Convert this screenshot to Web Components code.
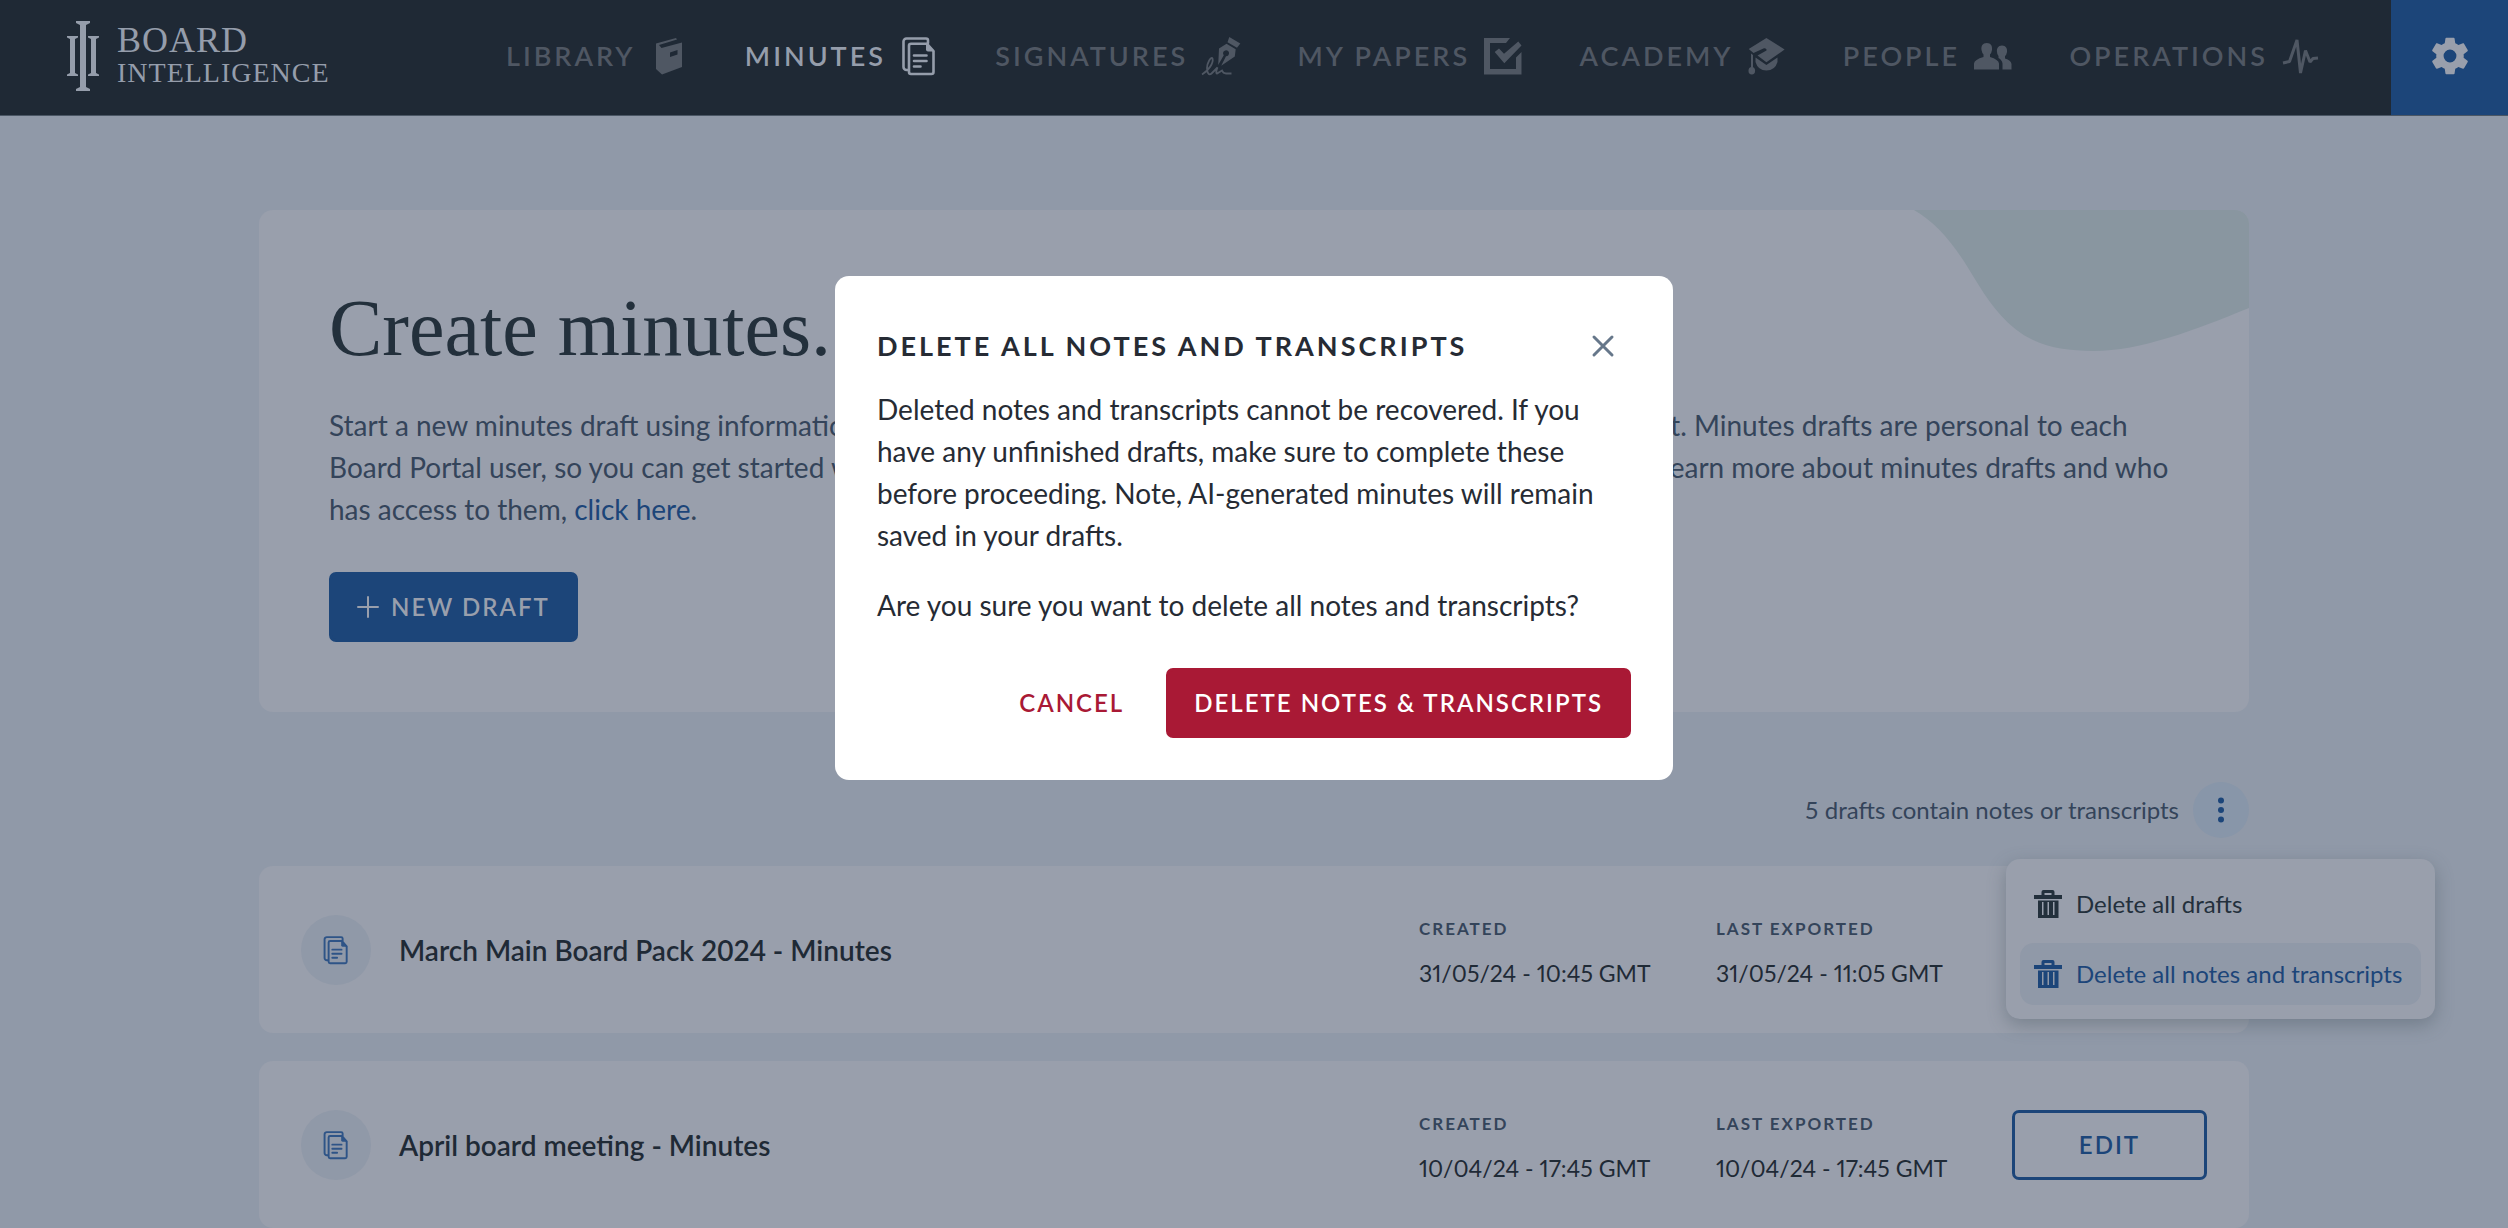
<!DOCTYPE html>
<html lang="en">
<head>
<meta charset="utf-8">
<title>Minutes</title>
<style>
  :root {
    --page: #9099a8;
    --card: #999fac;
    --bar: #1f2935;
    --blue: #1c4579;
    --red: #a91935;
    --ink: #1f2a36;
    --muted: #34445a;
  }
  body {
    margin: 0;
    min-height: 100vh;
    background: var(--page);
    color: var(--ink);
    font-family: Lato, "Liberation Sans", sans-serif;
    font-size: 28px;
    line-height: 42px;
  }
  main {
    box-sizing: border-box;
    max-width: 1990px;
    margin: 0 auto;
    padding-top: 94px;
  }
</style>
</head>
<body>
<top-bar>
  <nav-item icon="book">Library</nav-item>
  <nav-item icon="doc" active>Minutes</nav-item>
  <nav-item icon="sign">Signatures</nav-item>
  <nav-item icon="check">My papers</nav-item>
  <nav-item icon="academy">Academy</nav-item>
  <nav-item icon="people">People</nav-item>
  <nav-item icon="pulse">Operations</nav-item>
</top-bar>

<main>
  <hero-card heading="Create minutes.">
    Start a new minutes draft using information from any agenda, a book or your own notes, or create a blank draft. Minutes drafts are personal to each<br>
    Board Portal user, so you can get started without anyone else being able to view all your work in progress. To learn more about minutes drafts and who<br>
    has access to them, <text-link href="#help">click here</text-link>.
  </hero-card>
  <drafts-toolbar>
    5 drafts contain notes or transcripts
    <menu-item slot="menu">Delete all drafts</menu-item>
    <menu-item slot="menu" selected>Delete all notes and transcripts</menu-item>
  </drafts-toolbar>
  <draft-row created="31/05/24 - 10:45 GMT" exported="31/05/24 - 11:05 GMT">March Main Board Pack 2024 - Minutes</draft-row>
  <draft-row created="10/04/24 - 17:45 GMT" exported="10/04/24 - 17:45 GMT">April board meeting - Minutes</draft-row>
</main>

<confirm-dialog heading="Delete all notes and transcripts">
  <p>Deleted notes and transcripts cannot be recovered. If you have any unfinished drafts, make sure to complete these before proceeding. Note, AI-generated minutes will remain saved in your drafts.</p>
  <p>Are you sure you want to delete all notes and transcripts?</p>
  <app-button slot="actions" kind="text">Cancel</app-button>
  <app-button slot="actions" kind="danger">Delete notes &amp; transcripts</app-button>
</confirm-dialog>

<script>
const ICONS = {
  book: ["0 0 38 38", `
    <path d="M6 6.5 26 1l1 1.5L9 8l2.5 3L32 5.5V30l-20 7.5L6 32zM20 15.5v4.500l7.5-2.5V13z" fill-rule="evenodd"/>`],
  doc: ["0 0 38 38", `
    <g fill="none" stroke="currentColor" stroke-width="2.6" stroke-linecap="round" stroke-linejoin="round">
      <path d="M8 33H6.5A3 3 0 0 1 3.5 30V4.5A3 3 0 0 1 6.5 1.5H26a2 2 0 0 1 2 2V6"/>
      <path d="M27 6.8H11A2 2 0 0 0 9 8.8V35a2 2 0 0 0 2 2H31.5a2 2 0 0 0 2-2V14z"/>
      <path d="M14 18.5H26.5M14 24H26.5M14 29.5H20.5"/>
    </g>
    <path d="M26 5.5V12.5a2 2 0 0 0 2 2H34.5z"/>`],
  sign: ["0 0 38 38", `
    <path d="M27.3 0 38.3 6.5 35 10.7 25.5 5.3z"/>
    <path d="M24.5 6.8 33.7 12.3 32.8 19.5 19.2 28.8 24 19.3A3 3 0 1 0 21.8 18.3L16.2 28 17 11.5z"/>
    <path d="M0 37.5C6 34 12 26 10.5 21.5C9 19 5 26 5 31C5 36 7 39 9.5 36.5L15.5 30.5C14 34 14 36.5 15 36.5L20 33.5C21 36 22 36.5 24 36.5H29.5" fill="none" stroke="currentColor" stroke-width="1.8"/>`],
  check: ["0 0 38 38", `
    <path d="M0 1H26L22 6H6V32H32V20.5L37.5 15V37.5H0z"/>
    <path d="M10.7 15 15 11.5 20 16.7 34.3 4.5 37.5 8.5 20.3 26.3z"/>`],
  academy: ["0 0 38 38", `
    <path d="M18.4 1 36.6 12.5 18.4 25.3 9.5 18.5 18.5 13.5Q19 11 16 11.2L5.5 16 .7 12z"/>
    <path d="M7.5 20.5 18.4 28 29.5 20.5V25Q27 33.5 18.4 33.5Q10 33.5 7.5 25z"/>
    <path d="M3 16.5 5 18V31H3z"/><ellipse cx="3.8" cy="33.8" rx="3.3" ry="3.8"/>`],
  people: ["0 0 38 38", `
    <path d="M12.8 6C17 6 18.5 9 18 13Q17.5 16 16 17.5V20Q24.5 22.5 25 26.5V32.5H0V26.5Q.5 22.5 9.5 20V17.5Q8 16 7.5 13C7 9 8.5 6 12.8 6z"/>
    <path d="M28 8.5C32 8.5 33.5 11.5 33 15Q32.5 18 31 19V21.5Q37 23 37.5 27V32.5H28.5V26.5Q28 23 24.5 21V19Q23 17.5 23 15C22.5 11.5 24 8.5 28 8.5z"/>`],
  pulse: ["0 0 38 38", `
    <path d="M1 26 7.5 24.5 15 3 18.5 36 23.5 13.5 28 25 31 21.5 36 21" fill="none" stroke="currentColor" stroke-width="3" stroke-linejoin="bevel"/>`],
  gear: ["0 0 24 24", `
    <path d="M19.43 12.98c.04-.32.07-.64.07-.98s-.03-.66-.07-.98l2.11-1.65c.19-.15.24-.42.12-.64l-2-3.46c-.12-.22-.39-.3-.61-.22l-2.49 1c-.52-.4-1.08-.73-1.69-.98l-.38-2.65C14.46 2.18 14.25 2 14 2h-4c-.25 0-.46.18-.49.42l-.38 2.65c-.61.25-1.17.59-1.69.98l-2.49-1c-.23-.09-.49 0-.61.22l-2 3.46c-.13.22-.07.49.12.64l2.11 1.65c-.04.32-.07.65-.07.98s.03.66.07.98l-2.11 1.65c-.19.15-.24.42-.12.64l2 3.46c.12.22.39.3.61.22l2.49-1c.52.4 1.08.73 1.69.98l.38 2.65c.03.24.24.42.49.42h4c.25 0 .46-.18.49-.42l.38-2.65c.61-.25 1.17-.59 1.69-.98l2.49 1c.23.09.49 0 .61-.22l2-3.46c.12-.22.07-.49-.12-.64zM12 15.5a3.5 3.5 0 1 1 0-7 3.5 3.5 0 0 1 0 7z"/>`],
  trash: ["0 0 28 28", `
    <path d="M0 5H7.5V2Q7.5 0 9.5 0H18.5Q20.5 0 20.5 2V5H28V9H0zM10.5 5H17.5V3H10.5z" fill-rule="evenodd"/>
    <path d="M4 10.5H24.5V28H4zM8 12V25H9.5V12zM13.5 12V25H15V12zM19 12V25H20.5V12z" fill-rule="evenodd"/>`],
  plus: ["0 0 22 22", `<path d="M11 1V21M1 11H21" fill="none" stroke="currentColor" stroke-width="2" stroke-linecap="round"/>`],
  close: ["0 0 22 22", `<path d="M2 2 20 20M20 2 2 20" fill="none" stroke="currentColor" stroke-width="3" stroke-linecap="round"/>`],
  dots: ["0 0 28 28", `<circle cx="14" cy="4.5" r="3"/><circle cx="14" cy="14" r="3"/><circle cx="14" cy="23.5" r="3"/>`]
};

const BASE = `:host, * { box-sizing: border-box; }`;

class AppIcon extends HTMLElement {
  connectedCallback() {
    const [box, shapes] = ICONS[this.getAttribute("name")];
    this.attachShadow({ mode: "open" }).innerHTML = `
      <style>
        :host { display: block; flex: none; width: 38px; height: 38px; }
        svg { display: block; width: 100%; height: 100%; fill: currentColor; overflow: visible; }
      </style>
      <svg viewBox="${box}" aria-hidden="true">${shapes}</svg>
    `;
  }
}

class AppButton extends HTMLElement {
  connectedCallback() {
    const icon = this.getAttribute("icon");
    this.attachShadow({ mode: "open" }).innerHTML = `
      <style>
        ${BASE}
        :host { display: inline-block; }
        button {
          display: flex;
          align-items: center;
          justify-content: center;
          gap: 12px;
          width: 100%;
          height: 70px;
          padding: 0 25px;
          border: 3px solid transparent;
          border-radius: 7px;
          background: none;
          color: var(--red);
          font: 600 24px/36px Lato, "Liberation Sans", sans-serif;
          letter-spacing: 2px;
          text-transform: uppercase;
          white-space: nowrap;
          cursor: pointer;
        }
        :host([kind="primary"]) button { background: var(--blue); border-color: var(--blue); color: var(--card); }
        :host([kind="danger"]) button { background: var(--red); border-color: var(--red); color: #fff; }
        :host([kind="outline"]) button { border-color: var(--blue); color: var(--blue); }
        app-icon { width: 22px; height: 22px; }
      </style>
      <button type="button">${icon ? `<app-icon name="${icon}"></app-icon>` : ""}<slot></slot></button>
    `;
  }
}

class TextLink extends HTMLElement {
  connectedCallback() {
    this.attachShadow({ mode: "open" }).innerHTML =
      `<style>:host { display: inline; } a { color: var(--blue); text-decoration: none; }</style>` +
      `<a href="${this.getAttribute("href")}"><slot></slot></a>`;
  }
}

class NavItem extends HTMLElement {
  connectedCallback() {
    this.attachShadow({ mode: "open" }).innerHTML = `
      <style>
        ${BASE}
        :host { display: block; }
        a {
          display: flex;
          align-items: center;
          gap: 14px;
          color: #4f5763;
          font-size: 27px;
          font-weight: 600;
          letter-spacing: 3px;
          text-decoration: none;
          text-transform: uppercase;
          white-space: nowrap;
        }
        :host([active]) a { color: #959dab; }
      </style>
      <a href="#"><slot></slot><app-icon name="${this.getAttribute("icon")}"></app-icon></a>
    `;
  }
}

class TopBar extends HTMLElement {
  connectedCallback() {
    this.attachShadow({ mode: "open" }).innerHTML = `
      <style>
        ${BASE}
        :host {
          display: flex;
          align-items: stretch;
          height: 116px;
          background: var(--bar);
          border-bottom: 1px solid #4b5765;
        }
        .logo, nav, .settings { padding-bottom: 3px; }
        .logo {
          display: flex;
          align-items: center;
          gap: 18px;
          width: 506px;
          padding-left: 67px;
          color: #959dab;
          font-family: "Liberation Serif", serif;
          text-decoration: none;
        }
        .logo svg { width: 32px; height: 70px; fill: currentColor; }
        .name { display: grid; font-size: 28px; line-height: 32px; letter-spacing: 1px; }
        .name b { font-size: 36px; font-weight: 400; line-height: 34px; }
        nav {
          flex: 1;
          display: flex;
          align-items: center;
          justify-content: space-between;
          padding-right: 71px;
        }
        .settings {
          width: 117px;
          display: grid;
          place-items: center;
          padding-inline: 0;
          padding-top: 0;
          border: 0;
          background: var(--blue);
          color: var(--card);
          cursor: pointer;
        }
        .settings app-icon { width: 44px; height: 44px; }
      </style>
      <a class="logo" href="#">
        <svg viewBox="0 0 32 70" aria-hidden="true">
          <path d="M9 0H23V2L19 4V66L23 68V70H9V68L13 66V4L9 2z"/>
          <path d="M0 15H11V16.5L8 18V52L11 53.5V55H0V53.5L3 52V18L0 16.5z"/>
          <path d="M21 15H32V16.5L29 18V52L32 53.5V55H21V53.5L24 52V18L21 16.5z"/>
        </svg>
        <span class="name"><b>BOARD</b><span>INTELLIGENCE</span></span>
      </a>
      <nav><slot></slot></nav>
      <button class="settings" type="button" aria-label="Settings"><app-icon name="gear"></app-icon></button>
    `;
  }
}

class HeroCard extends HTMLElement {
  connectedCallback() {
    this.attachShadow({ mode: "open" }).innerHTML = `
      <style>
        ${BASE}
        :host {
          display: block;
          position: relative;
          overflow: hidden;
          padding: 70px;
          border-radius: 14px;
          background: var(--card);
        }
        .wave { position: absolute; top: 0; right: 0; width: 335px; height: 141px; fill: #8996a0; }
        h1 {
          margin: 0 0 28px;
          color: #23303c;
          font: 400 80px/96px "Liberation Serif", serif;
        }
        p { margin: 0 0 42px; color: var(--muted); white-space: nowrap; }
      </style>
      <svg class="wave" viewBox="0 0 334 141" preserveAspectRatio="none" aria-hidden="true">
        <path d="M0 0C22 13 38 32 54 58C68 81 80 102 101 119C122 136 148 141 179 141C226 141 280 120 334 98V0z"/>
      </svg>
      <h1>${this.getAttribute("heading")}</h1>
      <p><slot></slot></p>
      <app-button kind="primary" icon="plus">New draft</app-button>
    `;
  }
}

class MenuItem extends HTMLElement {
  connectedCallback() {
    this.attachShadow({ mode: "open" }).innerHTML = `
      <style>
        ${BASE}
        :host { display: block; }
        button {
          display: flex;
          align-items: center;
          gap: 14px;
          width: 100%;
          height: 62px;
          padding: 0 14px;
          border: 0;
          border-radius: 14px;
          background: none;
          color: #23303c;
          font: 24px/36px Lato, "Liberation Sans", sans-serif;
          white-space: nowrap;
          cursor: pointer;
        }
        :host([selected]) button { background: var(--page); color: var(--blue); }
        app-icon { width: 28px; height: 28px; }
      </style>
      <button type="button" role="menuitem"><app-icon name="trash"></app-icon><slot></slot></button>
    `;
  }
}

class DraftsToolbar extends HTMLElement {
  connectedCallback() {
    this.attachShadow({ mode: "open" }).innerHTML = `
      <style>
        ${BASE}
        :host {
          display: flex;
          align-items: center;
          justify-content: flex-end;
          gap: 14px;
          margin: 70px 0 28px;
          color: var(--muted);
          font-size: 24px;
          line-height: 36px;
        }
        .anchor { position: relative; }
        .more {
          display: grid;
          place-items: center;
          width: 56px;
          height: 56px;
          padding: 0;
          border: 0;
          border-radius: 50%;
          background: #8896a9;
          color: var(--blue);
          cursor: pointer;
        }
        .more app-icon { width: 28px; height: 28px; }
        .menu {
          position: absolute;
          z-index: 1;
          top: 77px;
          left: -187px;
          display: grid;
          gap: 8px;
          width: 429px;
          padding: 14px;
          border-radius: 14px;
          background: var(--card);
          box-shadow: 0 6px 18px rgba(70, 85, 95, .4);
        }
      </style>
      <span><slot></slot></span>
      <div class="anchor">
        <button class="more" type="button" aria-label="More actions" aria-expanded="true"><app-icon name="dots"></app-icon></button>
        <div class="menu" role="menu"><slot name="menu"></slot></div>
      </div>
    `;
  }
}

class DraftRow extends HTMLElement {
  connectedCallback() {
    this.attachShadow({ mode: "open" }).innerHTML = `
      <style>
        ${BASE}
        :host {
          display: grid;
          grid-template-columns: 70px 1fr 269px 268px 195px;
          align-items: center;
          column-gap: 28px;
          height: 167px;
          padding: 0 42px;
          border-radius: 14px;
          background: var(--card);
        }
        :host(:not(:last-of-type)) { margin-bottom: 28px; }
        .badge {
          display: grid;
          place-items: center;
          height: 70px;
          border-radius: 50%;
          background: var(--page);
          color: #2e5487;
        }
        .badge app-icon { width: 28px; height: 28px; }
        h2 { margin: 0; font-size: 28px; font-weight: 600; line-height: 42px; }
        dl { margin: 0; padding-top: 7px; }
        dt {
          color: var(--muted);
          font-size: 17px;
          font-weight: 700;
          line-height: 28px;
          letter-spacing: 2px;
          text-transform: uppercase;
        }
        dd {
          margin: 12px 0 0;
          font-size: 23px;
          line-height: 36px;
          font-variant-numeric: proportional-nums;
        }
      </style>
      <span class="badge"><app-icon name="doc"></app-icon></span>
      <h2><slot></slot></h2>
      <dl><dt>Created</dt><dd>${this.getAttribute("created")}</dd></dl>
      <dl><dt>Last exported</dt><dd>${this.getAttribute("exported")}</dd></dl>
      <app-button kind="outline">Edit</app-button>
    `;
  }
}

class ConfirmDialog extends HTMLElement {
  connectedCallback() {
    this.attachShadow({ mode: "open" }).innerHTML = `
      <style>
        ${BASE}
        :host {
          position: fixed;
          inset: 0;
          z-index: 2;
          display: flex;
          justify-content: center;
          align-items: flex-start;
          padding-top: 276px;
        }
        section {
          width: 838px;
          padding: 42px;
          border-radius: 14px;
          background: #fff;
          color: #262b34;
        }
        header { display: flex; align-items: center; justify-content: space-between; }
        h2 {
          margin: 0;
          font-size: 27px;
          font-weight: 700;
          line-height: 42px;
          letter-spacing: 3px;
          text-transform: uppercase;
        }
        .close {
          display: grid;
          place-items: center;
          width: 56px;
          height: 56px;
          padding: 0;
          border: 0;
          background: none;
          color: #66778a;
          cursor: pointer;
        }
        .close app-icon { width: 22px; height: 22px; }
        .body { margin-top: 14px; }
        ::slotted(p) { margin: 0 0 28px; }
        footer { display: flex; justify-content: flex-end; gap: 14px; padding-top: 14px; }
      </style>
      <section role="dialog" aria-modal="true" aria-labelledby="title">
        <header>
          <h2 id="title">${this.getAttribute("heading")}</h2>
          <button class="close" type="button" aria-label="Close"><app-icon name="close"></app-icon></button>
        </header>
        <div class="body"><slot></slot></div>
        <footer><slot name="actions"></slot></footer>
      </section>
    `;
  }
}

customElements.define("app-icon", AppIcon);
customElements.define("app-button", AppButton);
customElements.define("text-link", TextLink);
customElements.define("nav-item", NavItem);
customElements.define("top-bar", TopBar);
customElements.define("hero-card", HeroCard);
customElements.define("menu-item", MenuItem);
customElements.define("drafts-toolbar", DraftsToolbar);
customElements.define("draft-row", DraftRow);
customElements.define("confirm-dialog", ConfirmDialog);
</script>
</body>
</html>
